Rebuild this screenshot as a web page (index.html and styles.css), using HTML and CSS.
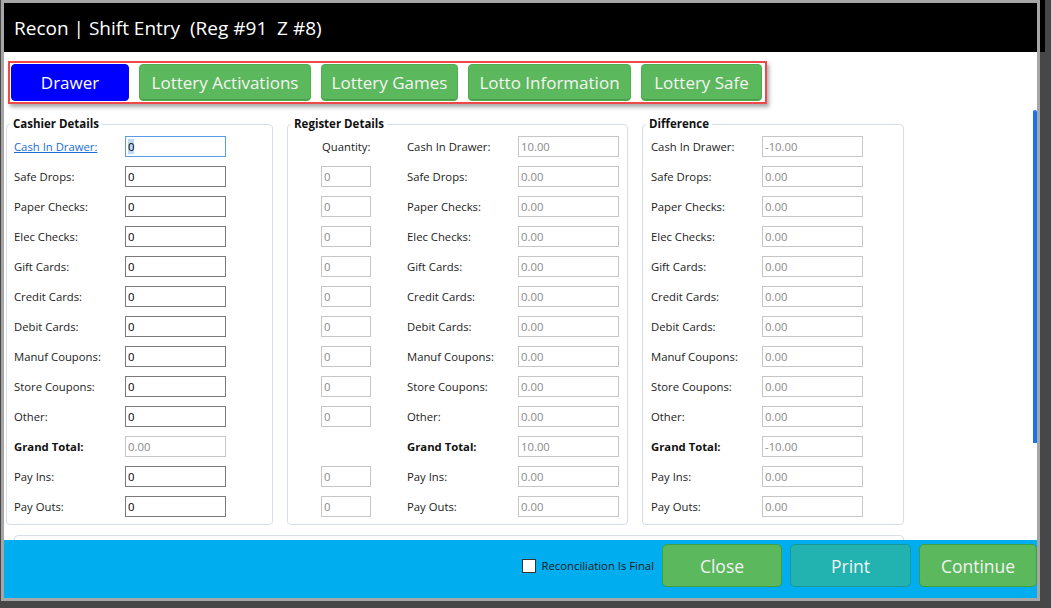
FILE: index.html
```html
<!DOCTYPE html>
<html lang="en">
<head>
    <meta charset="UTF-8" />
    <title>Recon | Shift Entry</title>
    <link rel="stylesheet" href="styles.css">
</head>
<body>
<div class="window">
    <div class="titlebar">Recon | Shift Entry  (Reg #91  Z #8)</div>

    <div class="content">
        <div class="tabs">
            <button class="tab active" style="width:118px">Drawer</button>
            <button class="tab" style="width:172px">Lottery Activations</button>
            <button class="tab" style="width:137px">Lottery Games</button>
            <button class="tab" style="width:163px">Lotto Information</button>
            <button class="tab" style="width:121px">Lottery Safe</button>
        </div>

        <div class="groups">
            <!-- what the cashier counted -->
            <fieldset class="group cashier">
                <legend>Cashier Details</legend>
                <div class="rows">
                    <a class="lbl link" href="#">Cash In Drawer:</a><span class="fld focus"><span class="sel">0</span></span>
                    <span class="lbl">Safe Drops:</span><span class="fld">0</span>
                    <span class="lbl">Paper Checks:</span><span class="fld">0</span>
                    <span class="lbl">Elec Checks:</span><span class="fld">0</span>
                    <span class="lbl">Gift Cards:</span><span class="fld">0</span>
                    <span class="lbl">Credit Cards:</span><span class="fld">0</span>
                    <span class="lbl">Debit Cards:</span><span class="fld">0</span>
                    <span class="lbl">Manuf Coupons:</span><span class="fld">0</span>
                    <span class="lbl">Store Coupons:</span><span class="fld">0</span>
                    <span class="lbl">Other:</span><span class="fld">0</span>
                    <span class="lbl bold">Grand Total:</span><span class="fld ro">0.00</span>
                    <span class="lbl">Pay Ins:</span><span class="fld">0</span>
                    <span class="lbl">Pay Outs:</span><span class="fld">0</span>
                </div>
            </fieldset>

            <!-- what the register says -->
            <fieldset class="group register">
                <legend>Register Details</legend>
                <div class="rows">
                    <span class="lbl qty-lbl">Quantity:</span><span class="lbl">Cash In Drawer:</span><span class="fld ro">10.00</span>
                    <span class="fld ro qty">0</span><span class="lbl">Safe Drops:</span><span class="fld ro">0.00</span>
                    <span class="fld ro qty">0</span><span class="lbl">Paper Checks:</span><span class="fld ro">0.00</span>
                    <span class="fld ro qty">0</span><span class="lbl">Elec Checks:</span><span class="fld ro">0.00</span>
                    <span class="fld ro qty">0</span><span class="lbl">Gift Cards:</span><span class="fld ro">0.00</span>
                    <span class="fld ro qty">0</span><span class="lbl">Credit Cards:</span><span class="fld ro">0.00</span>
                    <span class="fld ro qty">0</span><span class="lbl">Debit Cards:</span><span class="fld ro">0.00</span>
                    <span class="fld ro qty">0</span><span class="lbl">Manuf Coupons:</span><span class="fld ro">0.00</span>
                    <span class="fld ro qty">0</span><span class="lbl">Store Coupons:</span><span class="fld ro">0.00</span>
                    <span class="fld ro qty">0</span><span class="lbl">Other:</span><span class="fld ro">0.00</span>
                    <span></span><span class="lbl bold">Grand Total:</span><span class="fld ro">10.00</span>
                    <span class="fld ro qty">0</span><span class="lbl">Pay Ins:</span><span class="fld ro">0.00</span>
                    <span class="fld ro qty">0</span><span class="lbl">Pay Outs:</span><span class="fld ro">0.00</span>
                </div>
            </fieldset>

            <fieldset class="group difference">
                <legend>Difference</legend>
                <div class="rows">
                    <span class="lbl">Cash In Drawer:</span><span class="fld ro">-10.00</span>
                    <span class="lbl">Safe Drops:</span><span class="fld ro">0.00</span>
                    <span class="lbl">Paper Checks:</span><span class="fld ro">0.00</span>
                    <span class="lbl">Elec Checks:</span><span class="fld ro">0.00</span>
                    <span class="lbl">Gift Cards:</span><span class="fld ro">0.00</span>
                    <span class="lbl">Credit Cards:</span><span class="fld ro">0.00</span>
                    <span class="lbl">Debit Cards:</span><span class="fld ro">0.00</span>
                    <span class="lbl">Manuf Coupons:</span><span class="fld ro">0.00</span>
                    <span class="lbl">Store Coupons:</span><span class="fld ro">0.00</span>
                    <span class="lbl">Other:</span><span class="fld ro">0.00</span>
                    <span class="lbl bold">Grand Total:</span><span class="fld ro">-10.00</span>
                    <span class="lbl">Pay Ins:</span><span class="fld ro">0.00</span>
                    <span class="lbl">Pay Outs:</span><span class="fld ro">0.00</span>
                </div>
            </fieldset>
        </div>

        <div class="notes"></div>

        <div class="scroll-thumb"></div>
    </div>

    <div class="footer">
        <label class="final"><span class="check"></span>Reconciliation Is Final</label>
        <button class="btn" style="width:120px">Close</button>
        <button class="btn print" style="width:121px">Print</button>
        <button class="btn" style="width:118px">Continue</button>
    </div>
</div>
<div class="behind"></div>
</body>
</html>
```

FILE: styles.css
```css
* {
    box-sizing: border-box;
}

body {
    margin: 0;
    width: 1051px;
    height: 608px;
    overflow: hidden;
    position: relative;
    background: #474747;
    font-family: "Open Sans", "Noto Sans", sans-serif;
}

/* the dialog window */
.window {
    margin-left: 1px;
    width: 1039px;
    height: 601px;
    border: 3px solid #a6a6a6;
    background: #fff;
    display: flex;
    flex-direction: column;
}

.titlebar {
    height: 49px;
    flex: none;
    background: #000;
    color: #fff;
    font-size: 19px;
    padding-left: 10px;
    display: flex;
    align-items: center;
    white-space: pre;
}

.content {
    height: 488px;
    flex: none;
    position: relative;
    overflow: hidden;
    padding-top: 9px;
}

/* tab buttons inside the red frame */
.tabs {
    display: flex;
    width: fit-content;
    gap: 10px;
    margin-left: 4px;
    padding: 1px 3px 1px 1px;
    border: 2px solid #ef4848;
    box-shadow: 2px 3px 4px rgba(0, 0, 0, 0.35);
}

.tab {
    height: 37px;
    padding: 0;
    border: 1px solid #4cae4c;
    border-radius: 4px;
    background: #5cb85c;
    color: #f4f4f4;
    font-family: inherit;
    font-size: 17px;
    box-shadow: inset 0 -1px 0 #4a9a4a;
}

.tab.active {
    background: #0000ff;
    border-color: #0000ff;
    color: #fff;
    box-shadow: none;
}

/* group boxes */
.groups {
    display: flex;
    gap: 14px;
    margin: 13px 0 0 2px;
}

.group {
    margin: 0;
    min-width: 0;
    padding: 5px 0 7px;
    border: 1px solid #d6dee6;
    border-radius: 4px;
}

.group legend {
    margin-left: 3px;
    padding: 0 3px;
    font-size: 11.5px;
    line-height: 14px;
    font-weight: 700;
    color: #111;
}

.cashier { width: 267px; }
.register { width: 341px; }
.difference { width: 262px; }

.rows {
    display: grid;
    grid-auto-rows: 21px;
    row-gap: 9px;
    align-items: center;
}

.cashier .rows {
    grid-template-columns: 111px 101px;
    padding-left: 7px;
}

.register .rows {
    grid-template-columns: 86px 111px 101px;
    padding-left: 33px;
}

.difference .rows {
    grid-template-columns: 111px 101px;
    padding-left: 8px;
}

.lbl {
    font-size: 11.3px;
    color: #222;
    white-space: nowrap;
}

.lbl.bold {
    font-weight: 700;
    color: #111;
}

.lbl.link {
    color: #1a6dd6;
    text-decoration: underline;
}

.qty-lbl {
    padding-left: 1px;
}

.fld {
    display: block;
    height: 21px;
    border: 1px solid #7a7a7a;
    padding-left: 2px;
    font-size: 11.3px;
    line-height: 19px;
    color: #000;
}

.fld.ro {
    border-color: #c6c6c6;
    color: #8a8a8a;
}

.fld.qty {
    width: 50px;
}

.fld.focus {
    border-color: #5a9de6;
}

.sel {
    background: #bcd9f5;
}

/* next group box, mostly hidden under the footer */
.notes {
    width: 890px;
    height: 60px;
    margin: 10px 0 0 10px;
    border: 1px solid #d6dee6;
    border-radius: 4px;
}

.scroll-thumb {
    position: absolute;
    right: 0;
    top: 58px;
    width: 4px;
    height: 333px;
    background: #1a73e8;
    border-radius: 2px 2px 0 0;
}

/* bottom bar */
.footer {
    height: 58px;
    flex: none;
    background: #00adef;
    display: flex;
    justify-content: flex-end;
    align-items: flex-start;
    gap: 8px;
    padding-top: 4px;
}

.final {
    height: 43px;
    display: flex;
    align-items: center;
    gap: 6px;
    font-size: 11.3px;
    color: #1a1a1a;
}

.check {
    width: 14px;
    height: 14px;
    border: 1px solid #333;
    background: #fff;
}

.btn {
    height: 43px;
    padding: 0;
    border: 1px solid #3f9e3f;
    border-radius: 5px;
    background: #5cb85c;
    color: #f2f2f2;
    font-family: inherit;
    font-size: 17.5px;
}

.btn.print {
    background: #22b3b1;
    border-color: #1b9896;
}

/* edge of the window behind */
.behind {
    position: absolute;
    left: 1040px;
    top: 0;
    width: 5px;
    height: 52px;
    background: #000;
}
```
